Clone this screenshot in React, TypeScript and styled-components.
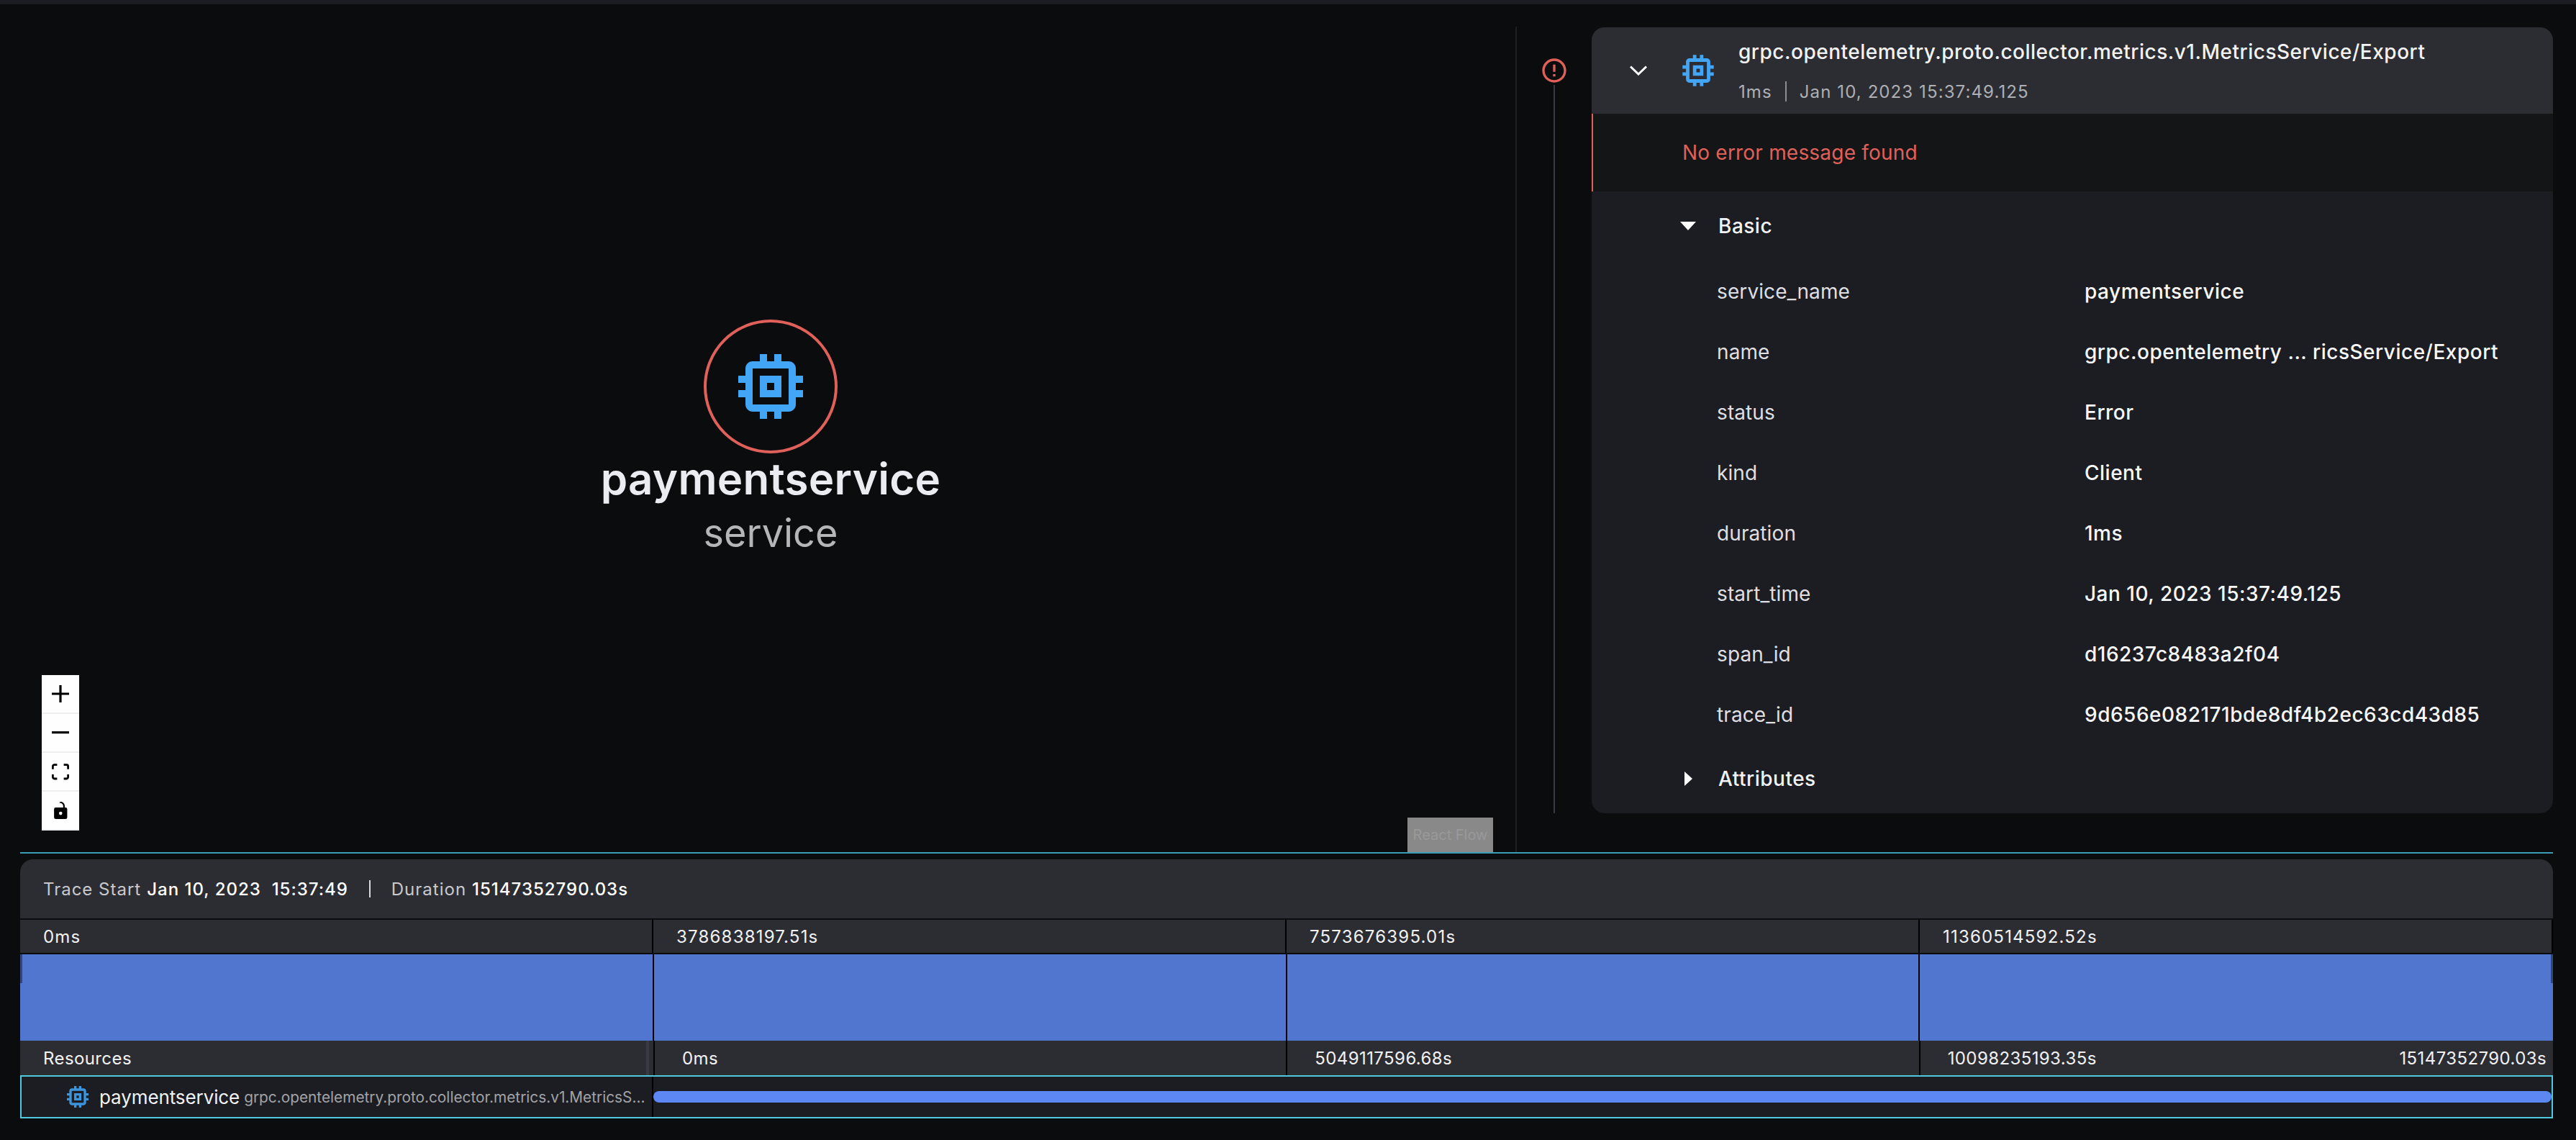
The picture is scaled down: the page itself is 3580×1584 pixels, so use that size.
import styled, { createGlobalStyle } from 'styled-components';

const GlobalStyle = createGlobalStyle`
  html, body {
    margin: 0;
    padding: 0;
    background: #0b0c0e;
  }
  * {
    box-sizing: border-box;
  }
  body {
    font-family: Inter, "Noto Sans", sans-serif;
    color: #fff;
  }
`;

const Page = styled.div`
  width: 3580px;
  height: 1584px;
  overflow: hidden;
  background: #0b0c0e;
  display: flex;
  flex-direction: column;
`;

const TopBar = styled.div`
  height: 6px;
  flex: none;
  background: #1b1d22;
`;

const Main = styled.div`
  height: 1178px;
  flex: none;
  display: flex;
`;

const GraphPane = styled.div`
  position: relative;
  width: 2108px;
  flex: none;
  &::after {
    content: '';
    position: absolute;
    right: 0;
    top: 31px;
    bottom: 0;
    width: 2px;
    background: #1f2024;
  }
`;

const Node = styled.div`
  position: absolute;
  left: 771px;
  top: 438px;
  width: 600px;
  display: flex;
  flex-direction: column;
  align-items: center;
`;

const NodeCircle = styled.div`
  width: 186px;
  height: 186px;
  border-radius: 50%;
  border: 4px solid #e0605a;
  display: flex;
  align-items: center;
  justify-content: center;
`;

const NodeName = styled.div`
  margin-top: -4px;
  font-size: 60px;
  line-height: 78px;
  font-weight: 600;
  letter-spacing: 0.3px;
  color: #ebecf1;
`;

const NodeKind = styled.div`
  margin-top: 3px;
  font-size: 54px;
  line-height: 68px;
  color: #b5b6ba;
`;

const Controls = styled.div`
  position: absolute;
  left: 58px;
  top: 932px;
  width: 52px;
  background: #fefefe;
`;

const ControlButton = styled.div`
  height: 54px;
  display: flex;
  align-items: center;
  justify-content: center;
  border-bottom: 2px solid #eee;
  svg {
    max-width: 24px;
    max-height: 24px;
    fill: #000;
  }
`;

const Attribution = styled.div`
  position: absolute;
  right: 33px;
  bottom: 0;
  width: 119px;
  height: 48px;
  background: #898989;
  color: #999;
  font-size: 20px;
  display: flex;
  align-items: center;
  justify-content: center;
`;

const DetailPane = styled.div`
  flex: 1;
  display: flex;
  padding: 32px 32px 0 0;
  align-items: flex-start;
`;

const Rail = styled.div`
  width: 104px;
  height: 1092px;
  flex: none;
  display: flex;
  flex-direction: column;
  align-items: center;
  padding-top: 40px;
  color: #e0605a;
`;

const RailLine = styled.div`
  flex: 1;
  width: 2px;
  background: #3a3b42;
`;

const Card = styled.div`
  width: 1336px;
  height: 1092px;
  flex: none;
  border-radius: 18px;
  background: #1b1d22;
  overflow: hidden;
`;

const CardHeader = styled.div`
  height: 120px;
  background: #2c2d33;
  display: flex;
  align-items: center;
  padding-left: 53px;
`;

const Chevron = styled.svg`
  width: 24px;
  height: 14px;
  flex: none;
  margin-right: 42px;
`;

const HeaderText = styled.div`
  margin-left: 27px;
  display: flex;
  flex-direction: column;
  gap: 24px;
`;

const SpanName = styled.div`
  font-size: 28px;
  line-height: 34px;
  font-weight: 500;
  letter-spacing: 0.5px;
  color: #f2f2f4;
`;

const SpanMeta = styled.div`
  display: flex;
  align-items: center;
  height: 28px;
  font-size: 24px;
  letter-spacing: 1.1px;
  color: #aeafb3;
`;

const MetaBar = styled.span`
  width: 2px;
  height: 28px;
  margin: 0 18px;
  background: #8d8e93;
`;

const ErrorBlock = styled.div`
  height: 108px;
  background: #141516;
  border-left: 2px solid #e0605a;
  padding-left: 124px;
  display: flex;
  align-items: center;
  font-size: 28px;
  letter-spacing: 0.2px;
  color: #e0605a;
`;

const CardBody = styled.div`
  padding: 24px 0 24px 0;
`;

const SectionHead = styled.div<{ $spaced?: boolean }>`
  height: 48px;
  margin-top: ${p => (p.$spaced ? '23px' : '0')};
  margin-bottom: ${p => (p.$spaced ? '0' : '25px')};
  padding-left: 122px;
  display: flex;
  align-items: center;
  font-size: 28px;
  font-weight: 500;
  letter-spacing: 0.5px;
  color: #f2f2f4;
`;

const Caret = styled.svg`
  width: 24px;
  height: 24px;
  flex: none;
  margin-right: 30px;
  fill: #fff;
`;

const InfoRow = styled.div`
  height: 84px;
  display: flex;
  align-items: center;
  padding-left: 174px;
  font-size: 28px;
`;

const InfoKey = styled.div`
  width: 511px;
  flex: none;
  letter-spacing: 0.1px;
  color: #dfdfe2;
`;

const InfoValue = styled.div`
  font-weight: 500;
  letter-spacing: 0.5px;
  color: #f7f7f9;
`;

const SplitLine = styled.div`
  height: 2px;
  flex: none;
  margin: 0 32px 0 28px;
  background: #3a9cb5;
`;

const Timeline = styled.div`
  margin: 8px 32px 0 28px;
  display: flex;
  flex-direction: column;
`;

const TraceHeader = styled.div`
  height: 82px;
  background: #2c2d33;
  border-radius: 18px 18px 0 0;
  padding-left: 32px;
  display: flex;
  align-items: center;
  font-size: 24px;
  letter-spacing: 1px;
  color: #c9c9cd;
`;

const TraceValue = styled.span`
  margin-left: 8px;
  font-weight: 500;
  color: #fff;
  white-space: pre;
`;

const TraceBar = styled.span`
  width: 2px;
  height: 24px;
  margin: 0 29px;
  background: #d8d8da;
`;

const AxisGrid = styled.div`
  height: 46px;
  margin-top: 2px;
  display: grid;
  grid-template-columns: repeat(4, 1fr);
  background: #2c2d33;
`;

const AxisCell = styled.div`
  display: flex;
  align-items: center;
  padding-left: 32px;
  border-right: 2px solid #000;
  font-size: 24px;
  letter-spacing: 1.2px;
  color: #f2f2f4;
`;

const Overview = styled.div`
  position: relative;
  height: 120px;
  margin-top: 2px;
  display: grid;
  grid-template-columns: 881px repeat(3, 1fr);
  background: #5076cf;
`;

const OverviewCell = styled.div<{ $last?: boolean }>`
  border-right: ${p => (p.$last ? 'none' : '2px solid #000')};
`;

const OverviewHandle = styled.div<{ $side: 'left' | 'right' }>`
  position: absolute;
  top: 0;
  ${p => p.$side}: 0;
  width: 3px;
  height: 40px;
  background: #2f4683;
`;

const ResourcesRow = styled.div`
  height: 48px;
  display: flex;
  background: #2c2d33;
  font-size: 24px;
  letter-spacing: 0.4px;
  color: #f2f2f4;
`;

const ResourcesLabel = styled.div`
  position: relative;
  width: 882px;
  flex: none;
  padding-left: 32px;
  display: flex;
  align-items: center;
  border-right: 2px solid #000;
  &::after {
    content: '';
    position: absolute;
    right: 6px;
    top: 0;
    bottom: 0;
    width: 4px;
    background: #3a3b42;
  }
`;

const TickGroup = styled.div`
  flex: 1;
  display: grid;
  grid-template-columns: repeat(3, 1fr);
`;

const Tick = styled.div<{ $last?: boolean }>`
  display: flex;
  align-items: center;
  justify-content: space-between;
  padding: 0 9px 0 38px;
  border-right: ${p => (p.$last ? 'none' : '2px solid #000')};
`;

const SpanRow = styled.div`
  height: 60px;
  display: flex;
  background: #1b1d22;
  border: 2px solid #4fc8e0;
`;

const SpanLabel = styled.div`
  width: 878px;
  flex: none;
  padding-left: 58px;
  display: flex;
  align-items: center;
  border-right: 2px solid #000;
  overflow: hidden;
`;

const SpanService = styled.span`
  margin-left: 10px;
  font-size: 26px;
  letter-spacing: -0.1px;
  color: #f2f2f4;
  white-space: nowrap;
`;

const SpanOperation = styled.span`
  margin-left: 6px;
  min-width: 0;
  font-size: 20.8px;
  color: #a2a3a8;
  white-space: nowrap;
  overflow: hidden;
  text-overflow: ellipsis;
  padding-right: 2px;
`;

const BarTrack = styled.div`
  flex: 1;
  display: flex;
  align-items: center;
`;

const Bar = styled.div`
  width: 100%;
  height: 16px;
  border-radius: 8px;
  background: #5d88f4;
`;

const MemoryIcon = ({ size, color }: { size: number; color: string }) => (
  <svg width={size} height={size} viewBox="0 0 24 24" fill={color} style={{ flex: 'none' }}>
    <path d="M15 9H9v6h6V9zm-2 4h-2v-2h2v2zm8-2V9h-2V7c0-1.1-.9-2-2-2h-2V3h-2v2h-2V3H9v2H7c-1.1 0-2 .9-2 2v2H3v2h2v2H3v2h2v2c0 1.1.9 2 2 2h2v2h2v-2h2v2h2v-2h2c1.1 0 2-.9 2-2v-2h2v-2h-2v-2h2zm-4 6H7V7h10v10z" />
  </svg>
);

const ErrorIcon = () => (
  <svg width="40" height="40" viewBox="0 0 24 24" fill="currentColor" style={{ flex: 'none' }}>
    <path d="M11 15h2v2h-2zm0-8h2v6h-2zm.99-5C6.47 2 2 6.48 2 12s4.47 10 9.99 10C17.52 22 22 17.52 22 12S17.52 2 11.99 2zM12 20c-4.42 0-8-3.58-8-8s3.58-8 8-8 8 3.58 8 8-3.58 8-8 8z" />
  </svg>
);

const rows = [
  ['service_name', 'paymentservice'],
  ['name', 'grpc.opentelemetry ... ricsService/Export'],
  ['status', 'Error'],
  ['kind', 'Client'],
  ['duration', '1ms'],
  ['start_time', 'Jan 10, 2023 15:37:49.125'],
  ['span_id', 'd16237c8483a2f04'],
  ['trace_id', '9d656e082171bde8df4b2ec63cd43d85'],
];

const axisLabels = ['0ms', '3786838197.51s', '7573676395.01s', '11360514592.52s'];

const App = () => {
  return (
    <Page>
      <GlobalStyle />
      <TopBar />
      <Main>
        <GraphPane>
          <Node>
            <NodeCircle>
              <MemoryIcon size={120} color="#42a5f5" />
            </NodeCircle>
            <NodeName>paymentservice</NodeName>
            <NodeKind>service</NodeKind>
          </Node>
          <Controls>
            <ControlButton>
              <svg viewBox="0 0 32 32" width="24" height="24">
                <path d="M32 18.133H18.133V32h-4.266V18.133H0v-4.266h13.867V0h4.266v13.867H32z" />
              </svg>
            </ControlButton>
            <ControlButton>
              <svg viewBox="0 0 32 5" width="24" height="4">
                <path d="M0 0h32v4.2H0z" />
              </svg>
            </ControlButton>
            <ControlButton>
              <svg viewBox="0 0 32 30" width="24" height="23">
                <path d="M3.692 4.63c0-.53.4-.938.939-.938h5.215V0H4.708C2.13 0 0 2.054 0 4.63v5.216h3.692V4.631zM27.354 0h-5.2v3.692h5.17c.53 0 .984.4.984.939v5.215H32V4.631A4.624 4.624 0 0027.354 0zm.954 24.83c0 .532-.4.94-.939.94h-5.215v3.768h5.215c2.577 0 4.631-2.13 4.631-4.707v-5.139h-3.692v5.139zm-23.677.94c-.531 0-.939-.4-.939-.94v-5.138H0v5.139c0 2.577 2.13 4.707 4.708 4.707h5.138V25.77H4.631z" />
              </svg>
            </ControlButton>
            <ControlButton>
              <svg viewBox="0 0 25 32" width="19" height="24">
                <path d="M21.333 10.667H19.81V7.619C19.81 3.429 16.38 0 12.19 0c-4.114 1.828-1.37 2.133.305 2.438 1.676.305 4.42 2.59 4.42 5.181v3.048H3.047A3.056 3.056 0 000 13.714v15.238A3.056 3.056 0 003.048 32h18.285a3.056 3.056 0 003.048-3.048V13.714a3.056 3.056 0 00-3.048-3.047zM12.19 24.533a3.056 3.056 0 01-3.047-3.047 3.056 3.056 0 013.047-3.048 3.056 3.056 0 013.048 3.048 3.056 3.056 0 01-3.048 3.047z" />
              </svg>
            </ControlButton>
          </Controls>
          <Attribution>React Flow</Attribution>
        </GraphPane>
        <DetailPane>
          <Rail>
            <ErrorIcon />
            <RailLine />
          </Rail>
          <Card>
            <CardHeader>
              <Chevron viewBox="0 0 24 14" fill="none" stroke="#fff" strokeWidth="3">
                <path d="M1 1.5 12 12 23 1.5" />
              </Chevron>
              <MemoryIcon size={58} color="#42a5f5" />
              <HeaderText>
                <SpanName>grpc.opentelemetry.proto.collector.metrics.v1.MetricsService/Export</SpanName>
                <SpanMeta>
                  1ms
                  <MetaBar />
                  Jan 10, 2023 15:37:49.125
                </SpanMeta>
              </HeaderText>
            </CardHeader>
            <ErrorBlock>No error message found</ErrorBlock>
            <CardBody>
              <SectionHead>
                <Caret viewBox="0 0 24 24">
                  <path d="M1 6h22L12 18z" />
                </Caret>
                Basic
              </SectionHead>
              {rows.map(([key, value]) => (
                <InfoRow key={key}>
                  <InfoKey>{key}</InfoKey>
                  <InfoValue>{value}</InfoValue>
                </InfoRow>
              ))}
              <SectionHead $spaced>
                <Caret viewBox="0 0 24 24">
                  <path d="M7 2l11 10L7 22z" />
                </Caret>
                Attributes
              </SectionHead>
            </CardBody>
          </Card>
        </DetailPane>
      </Main>
      <SplitLine />
      <Timeline>
        <TraceHeader>
          Trace Start<TraceValue>Jan 10, 2023  15:37:49</TraceValue>
          <TraceBar />
          Duration<TraceValue>15147352790.03s</TraceValue>
        </TraceHeader>
        <AxisGrid>
          {axisLabels.map(label => (
            <AxisCell key={label}>{label}</AxisCell>
          ))}
        </AxisGrid>
        <Overview>
          <OverviewCell />
          <OverviewCell />
          <OverviewCell />
          <OverviewCell $last />
          <OverviewHandle $side="left" />
          <OverviewHandle $side="right" />
        </Overview>
        <ResourcesRow>
          <ResourcesLabel>Resources</ResourcesLabel>
          <TickGroup>
            <Tick>0ms</Tick>
            <Tick>5049117596.68s</Tick>
            <Tick $last>
              <span>10098235193.35s</span>
              <span>15147352790.03s</span>
            </Tick>
          </TickGroup>
        </ResourcesRow>
        <SpanRow>
          <SpanLabel>
            <MemoryIcon size={40} color="#3b94dc" />
            <SpanService>paymentservice</SpanService>
            <SpanOperation>grpc.opentelemetry.proto.collector.metrics.v1.MetricsService/Export</SpanOperation>
          </SpanLabel>
          <BarTrack>
            <Bar />
          </BarTrack>
        </SpanRow>
      </Timeline>
    </Page>
  );
};

export default App;
